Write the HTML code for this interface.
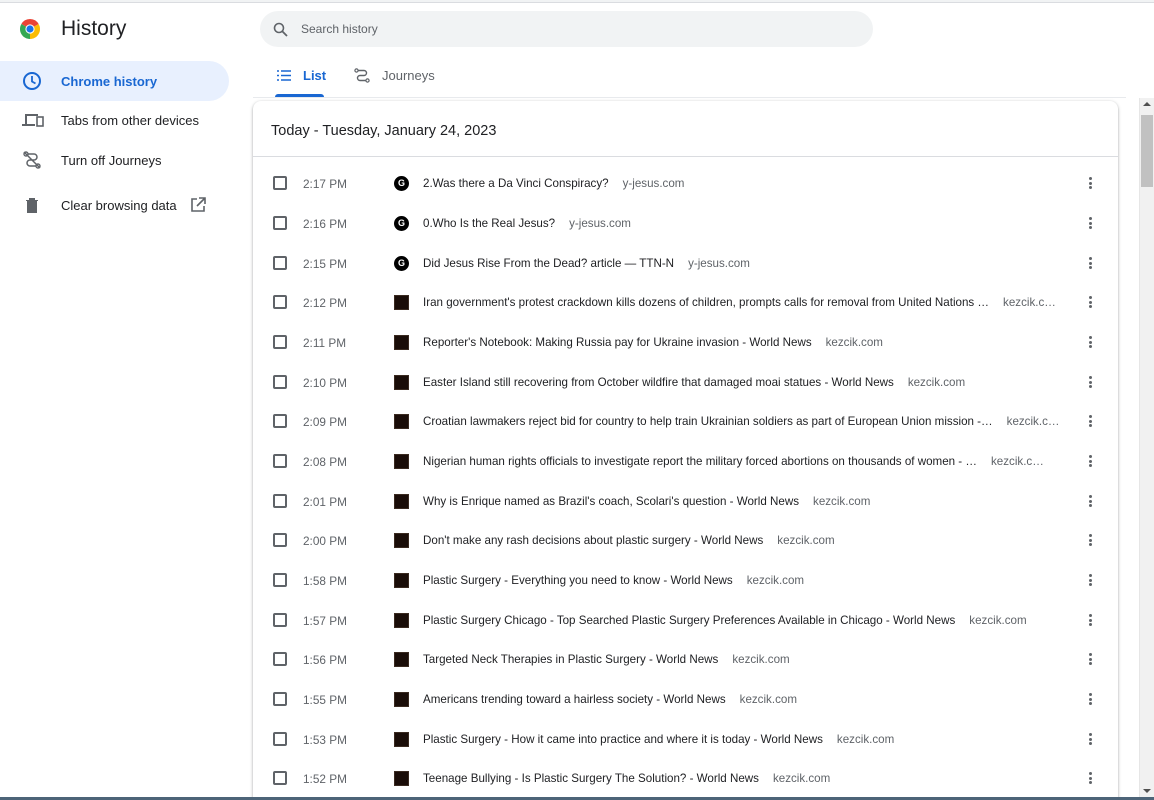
<!DOCTYPE html>
<html style="width:1154px;height:800px;overflow:hidden"><head><meta charset="utf-8"><style>
*{box-sizing:border-box;margin:0;padding:0}
body{width:1154px;height:800px;overflow:hidden;background:#fff;font-family:"Liberation Sans",Arial,sans-serif;position:relative;color:#202124}
.topline{position:absolute;left:0;top:0;width:1154px;height:3px;background:#f1f3f4;border-bottom:1px solid #dadce0}
.title{position:absolute;left:61px;top:17px;font-size:21px;color:#202124}
.nav{position:absolute;left:0;width:229px;height:40px;font-size:13px;color:#202124;display:flex;align-items:center}
.nav span{position:absolute;left:61px}
.nav svg{position:absolute;left:22px}
.sel{background:#e8f0fe;border-radius:0 20px 20px 0;color:#1967d2;font-weight:bold}
.search{position:absolute;left:260px;top:11px;width:613px;height:36px;background:#f1f3f4;border-radius:18px}
.search span{position:absolute;left:41px;top:11px;font-size:12px;color:#5f6368}
.tab{position:absolute;top:68px;font-size:13px}
.card{position:absolute;left:253px;top:101px;width:865px;height:699px;background:#fff;border-radius:8px 8px 0 0;box-shadow:0 1px 3px rgba(60,64,67,.35),0 1px 2px rgba(60,64,67,.15);overflow:hidden}
.hdr{position:absolute;left:18px;top:22px;font-size:14.5px;color:#202124}
.sep{position:absolute;left:0;top:55px;width:865px;height:1px;background:#dadce0}
.row{position:absolute;left:0;width:865px;height:40px;font-size:11.6px}
.cb{position:absolute;left:20px;top:13px;width:14px;height:14px;border:2px solid #5f6368;border-radius:2px}
.tm{position:absolute;left:50px;top:14px;color:#5f6368;font-size:11.8px}
.fav{position:absolute;left:141px;top:13px;width:15px;height:15px}
.g{border-radius:50%;background:#000;color:#fff;font-size:9px;font-weight:bold;text-align:center;line-height:15px}
.n{background:#1a0d08;border:1px solid #3a2a20}
.tt{position:absolute;left:170px;top:14px;white-space:nowrap;color:#202124}
.tt i{font-style:normal;color:#5f6368;margin-left:14px}
.dots{position:absolute;left:836px;top:14px;width:3px}
.dots b{display:block;width:3px;height:3px;background:#5f6368;border-radius:50%;margin-bottom:1.5px}
.sb{position:absolute;left:1139px;top:98px;width:15px;height:700px;background:#f1f1f1;border-left:1px solid #e6e6e6}
.thumb{position:absolute;left:1141px;top:115px;width:12px;height:72px;background:#c1c1c1}
.bottom{position:absolute;left:0;top:797px;width:1154px;height:3px;background:#4d6478}
</style></head><body>
<div class="topline"></div>
<svg style="position:absolute;left:20px;top:19px" width="20" height="20" viewBox="0 0 20 20">
<path d="M10 0 A10 10 0 0 1 18.66 5 L10 10 L1.34 5 A10 10 0 0 1 10 0Z" fill="#ea4335"/>
<path d="M1.34 5 A10 10 0 0 0 10 20 L10 10Z" fill="#34a853"/>
<path d="M18.66 5 A10 10 0 0 1 10 20 L10 10Z" fill="#fbbc04"/>
<circle cx="10" cy="10" r="4.6" fill="#fff"/><circle cx="10" cy="10" r="3.6" fill="#1a73e8"/></svg>
<div class="title">History</div>
<div class="nav sel" style="top:61px"><svg width="20" height="20" viewBox="0 0 20 20"><circle cx="10" cy="10" r="8" fill="none" stroke="#1967d2" stroke-width="2"/><path d="M10 5v5.5l3.5 2" fill="none" stroke="#1967d2" stroke-width="1.8"/></svg><span>Chrome history</span></div>
<div class="nav" style="top:100px"><svg width="22" height="20" viewBox="0 0 22 20"><path d="M3 4h13v2H5v8h8v2H0v-2h3z" fill="#5f6368"/><rect x="15" y="7" width="6" height="9" fill="none" stroke="#5f6368" stroke-width="1.6"/></svg><span>Tabs from other devices</span></div>
<div class="nav" style="top:140px"><svg width="20" height="20" viewBox="0 0 20 20"><circle cx="4" cy="4" r="2" fill="none" stroke="#5f6368" stroke-width="1.4"/><circle cx="16" cy="16" r="2" fill="none" stroke="#5f6368" stroke-width="1.4"/><path d="M6 4h6a3 3 0 0 1 0 6H8a3 3 0 0 0 0 6h6M2 2l16 16" fill="none" stroke="#5f6368" stroke-width="1.5"/></svg><span>Turn off Journeys</span></div>
<div class="nav" style="top:185px"><svg width="20" height="20" viewBox="0 0 20 20"><path d="M4 5h12v1H4zM7 3h6v2H7zM5 6h10v12H5z" fill="#5f6368"/></svg><span>Clear browsing data</span>
<svg style="left:190px" width="16" height="16" viewBox="0 0 16 16"><path d="M7 2H2v12h12V9M9 1h6v6M15 1L7 9" fill="none" stroke="#5f6368" stroke-width="1.6"/></svg></div>
<div class="search"><svg style="position:absolute;left:13px;top:11px" width="15" height="15" viewBox="0 0 15 15"><circle cx="6" cy="6" r="4.5" fill="none" stroke="#5f6368" stroke-width="1.6"/><path d="M9.5 9.5L14 14" stroke="#5f6368" stroke-width="1.8"/></svg><span>Search history</span></div>
<svg style="position:absolute;left:277px;top:70px" width="14" height="11" viewBox="0 0 14 11"><path d="M0 1h2M4 1h10M0 5.5h2M4 5.5h10M0 10h2M4 10h10" stroke="#1967d2" stroke-width="1.6"/></svg>
<div class="tab" style="left:303px;color:#1967d2;font-weight:bold">List</div>
<div style="position:absolute;left:275px;top:94px;width:49px;height:3px;background:#1967d2;border-radius:3px 3px 0 0"></div>
<svg style="position:absolute;left:354px;top:68px" width="16" height="15" viewBox="0 0 16 15"><circle cx="2.5" cy="2.5" r="1.6" fill="none" stroke="#5f6368" stroke-width="1.2"/><circle cx="13.5" cy="12.5" r="1.6" fill="none" stroke="#5f6368" stroke-width="1.2"/><path d="M4 2.5h6a2.5 2.5 0 0 1 0 5H6a2.5 2.5 0 0 0 0 5h6" fill="none" stroke="#5f6368" stroke-width="1.4"/></svg>
<div class="tab" style="left:382px;color:#5f6368">Journeys</div>
<div style="position:absolute;left:253px;top:97px;width:873px;height:1px;background:#e8eaed"></div>
<div class="card"><div class="hdr">Today - Tuesday, January 24, 2023</div><div class="sep"></div>
<div class="row" style="top:62px"><div class="cb"></div><div class="tm">2:17 PM</div><div class="fav g">G</div><div class="tt">2.Was there a Da Vinci Conspiracy?<i>y-jesus.com</i></div><div class="dots"><b></b><b></b><b></b></div></div>
<div class="row" style="top:102px"><div class="cb"></div><div class="tm">2:16 PM</div><div class="fav g">G</div><div class="tt">0.Who Is the Real Jesus?<i>y-jesus.com</i></div><div class="dots"><b></b><b></b><b></b></div></div>
<div class="row" style="top:142px"><div class="cb"></div><div class="tm">2:15 PM</div><div class="fav g">G</div><div class="tt">Did Jesus Rise From the Dead? article — TTN-N<i>y-jesus.com</i></div><div class="dots"><b></b><b></b><b></b></div></div>
<div class="row" style="top:181px"><div class="cb"></div><div class="tm">2:12 PM</div><div class="fav n"></div><div class="tt">Iran government's protest crackdown kills dozens of children, prompts calls for removal from United Nations …<i>kezcik.c…</i></div><div class="dots"><b></b><b></b><b></b></div></div>
<div class="row" style="top:221px"><div class="cb"></div><div class="tm">2:11 PM</div><div class="fav n"></div><div class="tt">Reporter's Notebook: Making Russia pay for Ukraine invasion - World News<i>kezcik.com</i></div><div class="dots"><b></b><b></b><b></b></div></div>
<div class="row" style="top:261px"><div class="cb"></div><div class="tm">2:10 PM</div><div class="fav n"></div><div class="tt">Easter Island still recovering from October wildfire that damaged moai statues - World News<i>kezcik.com</i></div><div class="dots"><b></b><b></b><b></b></div></div>
<div class="row" style="top:300px"><div class="cb"></div><div class="tm">2:09 PM</div><div class="fav n"></div><div class="tt">Croatian lawmakers reject bid for country to help train Ukrainian soldiers as part of European Union mission -…<i>kezcik.c…</i></div><div class="dots"><b></b><b></b><b></b></div></div>
<div class="row" style="top:340px"><div class="cb"></div><div class="tm">2:08 PM</div><div class="fav n"></div><div class="tt">Nigerian human rights officials to investigate report the military forced abortions on thousands of women - …<i>kezcik.c…</i></div><div class="dots"><b></b><b></b><b></b></div></div>
<div class="row" style="top:380px"><div class="cb"></div><div class="tm">2:01 PM</div><div class="fav n"></div><div class="tt">Why is Enrique named as Brazil's coach, Scolari's question - World News<i>kezcik.com</i></div><div class="dots"><b></b><b></b><b></b></div></div>
<div class="row" style="top:419px"><div class="cb"></div><div class="tm">2:00 PM</div><div class="fav n"></div><div class="tt">Don't make any rash decisions about plastic surgery - World News<i>kezcik.com</i></div><div class="dots"><b></b><b></b><b></b></div></div>
<div class="row" style="top:459px"><div class="cb"></div><div class="tm">1:58 PM</div><div class="fav n"></div><div class="tt">Plastic Surgery - Everything you need to know - World News<i>kezcik.com</i></div><div class="dots"><b></b><b></b><b></b></div></div>
<div class="row" style="top:499px"><div class="cb"></div><div class="tm">1:57 PM</div><div class="fav n"></div><div class="tt">Plastic Surgery Chicago - Top Searched Plastic Surgery Preferences Available in Chicago - World News<i>kezcik.com</i></div><div class="dots"><b></b><b></b><b></b></div></div>
<div class="row" style="top:538px"><div class="cb"></div><div class="tm">1:56 PM</div><div class="fav n"></div><div class="tt">Targeted Neck Therapies in Plastic Surgery - World News<i>kezcik.com</i></div><div class="dots"><b></b><b></b><b></b></div></div>
<div class="row" style="top:578px"><div class="cb"></div><div class="tm">1:55 PM</div><div class="fav n"></div><div class="tt">Americans trending toward a hairless society - World News<i>kezcik.com</i></div><div class="dots"><b></b><b></b><b></b></div></div>
<div class="row" style="top:618px"><div class="cb"></div><div class="tm">1:53 PM</div><div class="fav n"></div><div class="tt">Plastic Surgery - How it came into practice and where it is today - World News<i>kezcik.com</i></div><div class="dots"><b></b><b></b><b></b></div></div>
<div class="row" style="top:657px"><div class="cb"></div><div class="tm">1:52 PM</div><div class="fav n"></div><div class="tt">Teenage Bullying - Is Plastic Surgery The Solution? - World News<i>kezcik.com</i></div><div class="dots"><b></b><b></b><b></b></div></div>
</div>
<div class="sb"></div><div class="thumb"></div>
<div style="position:absolute;left:1143px;top:102px;width:0;height:0;border-left:4px solid transparent;border-right:4px solid transparent;border-bottom:4px solid #505050"></div>
<div style="position:absolute;left:1143px;top:789px;width:0;height:0;border-left:4px solid transparent;border-right:4px solid transparent;border-top:4px solid #505050"></div>
<div class="bottom"></div>
</body></html>
